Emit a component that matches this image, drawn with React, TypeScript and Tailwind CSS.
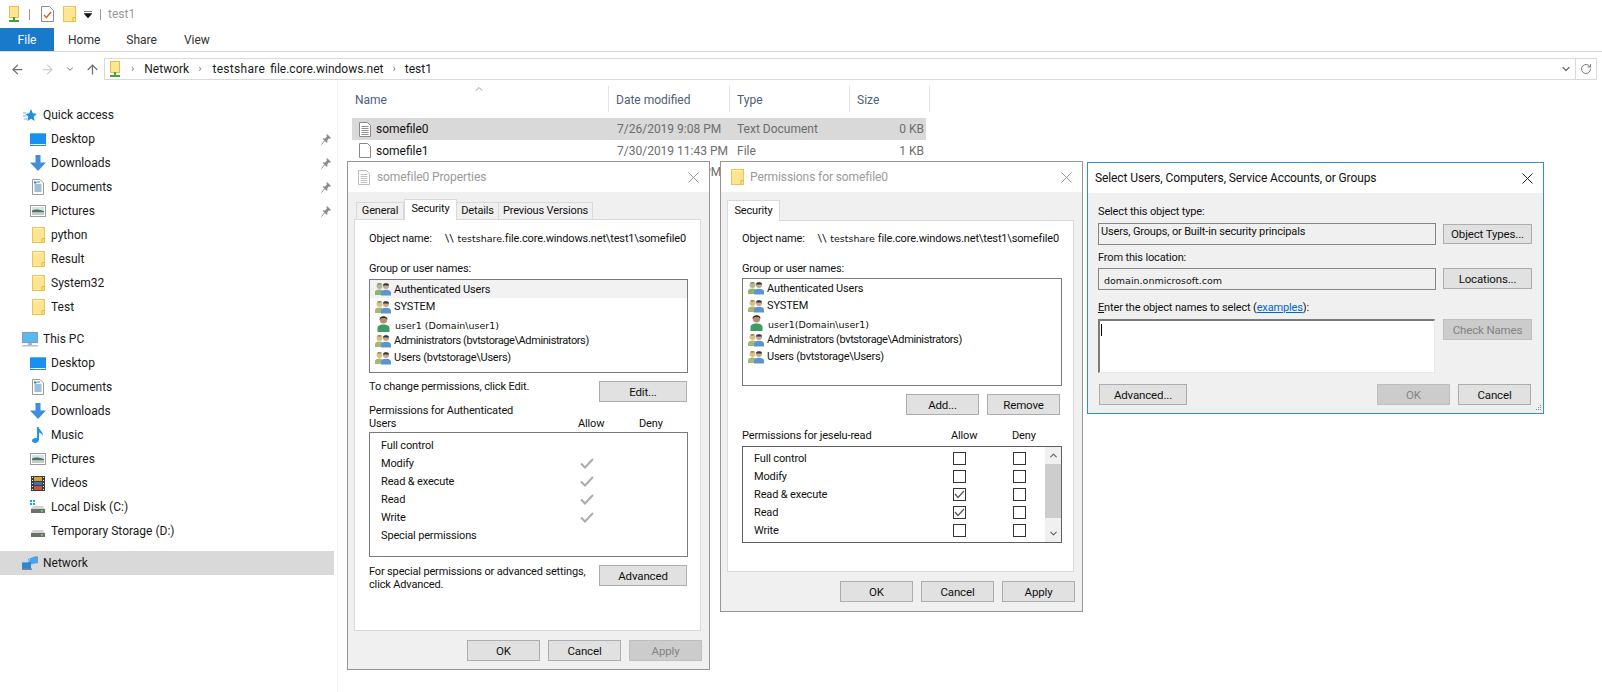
import React from "react";
import { ArrowLeft, ArrowRight, ArrowUp, ChevronDown, ChevronUp, RotateCw } from "lucide-react";

const Folder = ({ w = 13, h = 16 }: { w?: number; h?: number }) => (
  <svg width={w} height={h} viewBox="0 0 13 16" className="shrink-0">
    <rect x="0.5" y="0.5" width="12" height="15" fill="#fde594" stroke="#ecc34f" />
    <path d="M10 15.5V11.5H12.5" fill="none" stroke="#e5b52f" />
    <rect x="1" y="1" width="9" height="1" fill="#fff3c4" />
  </svg>
);

const NetFolder = () => (
  <svg width="10" height="16" viewBox="0 0 10 16" className="shrink-0">
    <rect x="0.5" y="0.5" width="9" height="11" fill="#fde594" stroke="#e8bd45" />
    <rect x="4" y="11" width="2" height="3" fill="#3fa535" />
    <rect x="0" y="14" width="10" height="2" fill="#3fa535" />
  </svg>
);

const FileIcon = ({ lines = true, faded = false }: { lines?: boolean; faded?: boolean }) => (
  <svg width="12" height="15" viewBox="0 0 12 15" className="shrink-0" opacity={faded ? 0.55 : 1}>
    <path d="M0.5 0.5H8.5L11.5 3.5V14.5H0.5Z" fill="#fff" stroke="#8a8a8a" />
    {lines && <path d="M2.5 4.5H9.5M2.5 6.5H9.5M2.5 8.5H9.5M2.5 10.5H9.5M2.5 12.5H9.5" stroke="#8f8f8f" strokeWidth="1" />}
  </svg>
);

const CheckDoc = () => (
  <svg width="13" height="16" viewBox="0 0 13 16">
    <path d="M0.5 0.5H8.5L12.5 4.5V15.5H0.5Z" fill="#fff" stroke="#8c8c8c" />
    <path d="M3 9L5.5 11.5L10 6" fill="none" stroke="#e2582b" strokeWidth="1.4" />
  </svg>
);

const Desktop = () => (
  <svg width="16" height="13" viewBox="0 0 16 13">
    <rect x="0" y="0" width="16" height="13" fill="#1a8fee" />
    <rect x="0" y="0" width="16" height="1" fill="#55b4f7" />
    <rect x="0.5" y="11" width="15" height="1" fill="#fff" />
    <rect x="1" y="11" width="3" height="1" fill="#cde9ff" />
  </svg>
);

const Down = () => (
  <svg width="16" height="16" viewBox="0 0 16 16">
    <path d="M5.5 0H10.5V7.5H16L8 16L0 7.5H5.5Z" fill="#3f8fdc" />
  </svg>
);

const Docs = () => (
  <svg width="12" height="16" viewBox="0 0 12 16">
    <path d="M0.5 0.5H8L11.5 4V15.5H0.5Z" fill="#fff" stroke="#9a9a9a" />
    <path d="M5 3H8M2.5 6H9.5M2.5 8H9.5M2.5 10H9.5M2.5 12H9.5" stroke="#3f7fb5" strokeWidth="1" />
    <rect x="2" y="2.5" width="2.5" height="2" fill="#3f7fb5" />
  </svg>
);

const Pics = () => (
  <svg width="16" height="12" viewBox="0 0 16 12">
    <rect x="0.5" y="0.5" width="15" height="11" fill="#fff" stroke="#9a9a9a" />
    <rect x="2" y="2" width="12" height="3" fill="#d5e2e8" />
    <path d="M2 5.5C5 4 9 4.5 14 6V7.5H2Z" fill="#4f7460" />
    <rect x="2" y="7.5" width="12" height="2.5" fill="#c0cdc6" />
  </svg>
);

const Music = () => (
  <svg width="12" height="16" viewBox="0 0 12 16">
    <path d="M5 0H6.6C7 3 11.5 4.5 11 9C10 6.8 8.5 6 7 5.6V12.8C7 14.8 5 16 3 16C1 16 0 15 0 13.6C0 12 2 11 3.5 11C4 11 4.6 11.1 5 11.3Z" fill="#1d94ee" />
  </svg>
);

const Videos = () => (
  <svg width="14" height="15" viewBox="0 0 14 15">
    <rect x="0" y="0" width="14" height="15" fill="#3c3c3c" />
    <rect x="3" y="1" width="8" height="4" fill="#d8a02f" />
    <rect x="3" y="6" width="8" height="3" fill="#3d6fc4" />
    <rect x="3" y="10" width="8" height="4" fill="#c7572f" />
    <path d="M1 1.5H2M1 4.5H2M1 7.5H2M1 10.5H2M1 13.5H2M12 1.5H13M12 4.5H13M12 7.5H13M12 10.5H13M12 13.5H13" stroke="#e8e8e8" />
  </svg>
);

const Disk = ({ win = false }: { win?: boolean }) => (
  <svg width="16" height="14" viewBox="0 0 16 14">
    {win && <path d="M0 0H2V2H0ZM3 0H5V2H3ZM0 3H2V5H0ZM3 3H5V5H3Z" fill="#19a3ee" />}
    <path d="M3 6H13L15 9H1Z" fill="#d4d4d4" />
    <rect x="1" y="9" width="14" height="4" fill="#6e6e6e" />
    <rect x="11" y="10" width="2" height="2" fill="#5fd04f" />
  </svg>
);

const Monitor = () => (
  <svg width="16" height="15" viewBox="0 0 16 15">
    <rect x="0.5" y="0.5" width="15" height="10" fill="#58b8f2" stroke="#7f9fb5" />
    <rect x="6" y="11" width="4" height="2" fill="#a8b6c0" />
    <rect x="0" y="13" width="16" height="1.5" fill="#b4c0c8" />
  </svg>
);

const NetworkIco = () => (
  <svg width="16" height="14" viewBox="0 0 16 14">
    <path d="M6 3L14 0L16 1V7L6 9Z" fill="#4fa3e2" />
    <path d="M0 6H9V13H0Z" fill="#2f85cf" />
    <path d="M0 6H6L8 3" fill="none" stroke="#a9d6f5" />
    <rect x="0" y="12.5" width="10" height="1.5" fill="#7c8a96" />
  </svg>
);

const Star = () => (
  <svg width="14" height="13" viewBox="0 0 14 13">
    <path d="M8 0L9.8 4.2L14 4.7L10.8 7.6L11.7 12L8 9.7L4.3 12L5.2 7.6L2.5 5L6.3 4.3Z" fill="#1f8fe6" />
    <path d="M0 4H3M0 7H3.5M1 10H4" stroke="#66b7f0" />
  </svg>
);

const Pin = () => (
  <svg width="10" height="11" viewBox="0 0 10 11" className="ml-auto mr-[3px] shrink-0">
    <path d="M6 0L10 4L8.8 4.8L8 4.3L6.2 6.5L6.5 8.2L5.6 8.8L1.8 5L2.6 4.2L4.2 4.5L6 2.3L5.4 1Z" fill="#8a8a8a" />
    <path d="M3.5 7L0.5 10.5" stroke="#8a8a8a" />
  </svg>
);

const Close = ({ color = "#9a9a9a" }: { color?: string }) => (
  <svg width="11" height="11" viewBox="0 0 11 11" className="shrink-0">
    <path d="M0.5 0.5L10.5 10.5M10.5 0.5L0.5 10.5" stroke={color} strokeWidth="1" />
  </svg>
);

const Users = ({ tint = "#d8c08c", body = "#a5b873" }: { tint?: string; body?: string }) => (
  <svg width="16" height="14" viewBox="0 0 16 14" className="shrink-0">
    <circle cx="4.5" cy="4" r="3" fill={tint} />
    <path d="M4 3L2 2C3 0.5 6 0.5 7 2Z" fill="#a08a52" />
    <path d="M0 13V10C0 8.5 2 7.5 4.5 7.5C7 7.5 8 8.5 8 10V13Z" fill={body} />
    <circle cx="11" cy="4" r="3" fill="#c9a58b" />
    <path d="M8 3.5C8 0.5 14 0.5 14 3.5Z" fill="#2f3a40" />
    <path d="M6 13.5V10.5C6 8.8 8.5 7.8 11 7.8C13.5 7.8 16 8.8 16 10.5V13.5Z" fill="#5b95cf" />
  </svg>
);

const User = () => (
  <svg width="13" height="18" viewBox="0 0 13 18" className="shrink-0">
    <circle cx="6.5" cy="5" r="3.6" fill="#b98d72" />
    <path d="M2.5 5C2 0 11 0 10.5 5L8.5 3H4.5Z" fill="#2a2a28" />
    <path d="M0.5 17V13C0.5 10.8 3 9.5 6.5 9.5C10 9.5 12.5 10.8 12.5 13V17Z" fill="#3f9a63" />
  </svg>
);

const Tick = () => (
  <svg width="14" height="11" viewBox="0 0 14 11">
    <path d="M1 5.5L5 9.5L13 1" fill="none" stroke="#ababab" strokeWidth="2" />
  </svg>
);

const Box = ({ on = false, faint = false }: { on?: boolean; faint?: boolean }) => (
  <div className={`w-[13px] h-[13px] border bg-white flex items-center justify-center ${faint ? "border-[#cccccc]" : "border-[#333333]"}`}>
    {on && (
      <svg width="11" height="9" viewBox="0 0 11 9">
        <path d="M1 4L4 7.5L10 1" fill="none" stroke="#555555" strokeWidth="1.2" />
      </svg>
    )}
  </div>
);

const Btn = ({ children, w = "w-[73px]", h = "h-[21px]", off = false }: { children: React.ReactNode; w?: string; h?: string; off?: boolean }) => (
  <div className={`${w} ${h} shrink-0 border flex items-center justify-center text-[11.5px] ${off ? "bg-[#cccccc] border-[#bfbfbf] text-[#838383]" : "bg-[#e1e1e1] border-[#adadad] text-[#111111]"}`}>
    {children}
  </div>
);

const NavRow = ({ icon, label, level = 1, pin = false, selected = false }: { icon: React.ReactNode; label: string; level?: number; pin?: boolean; selected?: boolean }) => (
  <div className={`h-[24px] w-[334px] flex items-center ${level === 1 ? "pl-[30px]" : "pl-[22px]"} ${selected ? "bg-[#d9d9d9]" : ""}`}>
    <span className="w-[16px] h-[16px] mr-[5px] shrink-0 flex items-center justify-center">{icon}</span>
    <span className="text-[#1a1a1a]">{label}</span>
    {pin && <Pin />}
  </div>
);

const FileRow = ({ name, date, type, size, sel = false, h, lines }: { name: string; date: string; type: string; size: string; sel?: boolean; h: string; lines: boolean }) => (
  <div className={`${h} w-[574px] grid grid-cols-[265px_120px_120px_69px] items-center ${sel ? "bg-[#d9d9d9]" : ""}`}>
    <div className="flex items-center pl-[7px] gap-[5px] text-[#111111]">
      <FileIcon lines={lines} />
      <span>{name}</span>
    </div>
    <span className="text-[#6d6d6d] whitespace-nowrap">{date}</span>
    <span className="text-[#6d6d6d]">{type}</span>
    <span className="text-[#6d6d6d] text-right pr-[2px]">{size}</span>
  </div>
);

const WinFrame = ({ pos, title, icon, active = false, children }: { pos: string; title: string; icon?: React.ReactNode; active?: boolean; children: React.ReactNode }) => (
  <section className={`absolute ${pos} bg-[#f0f0f0] border flex flex-col ${active ? "border-[#2b8fdc]" : "border-[#959595]"}`}>
    <header className={`h-[30px] shrink-0 bg-white flex items-center tracking-[-0.1px] ${active ? "pl-[7px]" : "pl-[10px]"}`}>
      {icon && <span className="w-[12px] mr-[7px] flex items-center shrink-0">{icon}</span>}
      <span className={active ? "text-[#111111]" : "text-[#9a9a9a]"}>{title}</span>
      <span className="ml-auto mr-[10px]">
        <Close color={active ? "#222222" : "#9a9a9a"} />
      </span>
    </header>
    <div className="flex-1 flex flex-col text-[11px] tracking-[-0.15px]">{children}</div>
  </section>
);

const PrincipalList = ({ cls, highlight, user }: { cls: string; highlight?: boolean; user: string }) => (
  <div className={`${cls} border border-[#7a7a7a] bg-white`}>
    <div className={`h-[18px] flex items-center pl-[5px] gap-[3px] ${highlight ? "bg-[#f2f2f2]" : ""}`}>
      <Users tint="#a9bb9a" body="#8fb36e" />
      <span className="pt-[1px]">Authenticated Users</span>
    </div>
    <div className="h-[17px] flex items-center pl-[5px] gap-[3px]">
      <Users />
      <span>SYSTEM</span>
    </div>
    <div className="h-[18px] flex items-center pl-[7px] gap-[5px]">
      <User />
      <span className="[font-family:'DejaVu_Sans',sans-serif] text-[9.5px] tracking-normal pt-[3px]">{user}</span>
    </div>
    <div className="h-[16px] flex items-center pl-[5px] gap-[3px]">
      <Users />
      <span className="tracking-[-0.4px]">Administrators (bvtstorage\Administrators)</span>
    </div>
    <div className="h-[17px] flex items-center pl-[5px] gap-[3px]">
      <Users />
      <span className="tracking-[-0.25px]">Users (bvtstorage\Users)</span>
    </div>
  </div>
);

const ObjectName = ({ mt, gap }: { mt: string; gap: string }) => (
  <div className={`h-[16px] ${mt} flex items-center whitespace-nowrap`}>
    <span className="w-[79px]">Object name:</span>
    <span>\\</span>
    <span className="[font-family:'DejaVu_Sans',sans-serif] text-[9.5px] tracking-normal ml-[4px]">testshare</span>
    <span className={gap}>file.core.windows.net\test1\somefile0</span>
  </div>
);

const PERMS = ["Full control", "Modify", "Read & execute", "Read", "Write", "Special permissions"];

export default function App() {
  return (
    <div className="relative w-[1602px] h-[692px] overflow-hidden bg-white text-[12px] leading-[16px] text-[#111111] [font-family:Roboto,sans-serif]">
      {/* Quick access toolbar */}
      <div className="h-[28px] flex items-center">
        <span className="ml-[9px]"><NetFolder /></span>
        <span className="ml-[10px] w-px h-[11px] bg-[#9a9a9a]" />
        <span className="ml-[11px]"><CheckDoc /></span>
        <span className="ml-[9px]"><Folder /></span>
        <svg width="8" height="7" viewBox="0 0 8 7" className="ml-[8px]">
          <path d="M0 0.5H8M0 2.5H8L4 7Z" fill="#111111" stroke="#111111" strokeWidth="0.5" />
        </svg>
        <span className="ml-[8px] w-px h-[11px] bg-[#9a9a9a]" />
        <span className="ml-[7px] text-[#9a9a9a]">test1</span>
      </div>
      {/* Ribbon tabs */}
      <div className="h-[24px] flex items-stretch border-b border-[#dadada]">
        <div className="w-[54px] bg-[#1979ca] text-white flex items-center justify-center">File</div>
        <div className="flex items-center text-[#333333]">
          <span className="ml-[14px]">Home</span>
          <span className="ml-[26px]">Share</span>
          <span className="ml-[27px]">View</span>
        </div>
      </div>
      {/* Address row */}
      <div className="h-[28px] pt-[6px] flex items-start">
        <div className="w-[104px] h-[22px] flex items-center shrink-0">
          <ArrowLeft size={15} strokeWidth={2} className="ml-[10px] text-[#6f6f6f]" />
          <ArrowRight size={15} strokeWidth={2} className="ml-[15px] text-[#cfcfcf]" />
          <ChevronDown size={10} strokeWidth={2.5} className="ml-[10px] text-[#8a8a8a]" />
          <ArrowUp size={15} strokeWidth={2} className="ml-[10px] text-[#6f6f6f]" />
        </div>
        <div className="w-[1493px] h-[22px] border border-[#d9d9d9] flex items-center">
          <span className="ml-[5px]"><NetFolder /></span>
          <span className="ml-[11px] text-[#777777] text-[11px]">›</span>
          <span className="ml-[10px] text-[#1a1a1a]">Network</span>
          <span className="ml-[9px] text-[#777777] text-[11px]">›</span>
          <span className="ml-[11px] text-[#1a1a1a] tracking-[0.3px]">testshare</span>
          <span className="ml-[5px] text-[#1a1a1a]">file.core.windows.net</span>
          <span className="ml-[9px] text-[#777777] text-[11px]">›</span>
          <span className="ml-[9px] text-[#1a1a1a]">test1</span>
          <ChevronDown size={12} strokeWidth={2.5} className="ml-auto mr-[3px] text-[#6f6f6f]" />
          <span className="w-px h-full bg-[#d9d9d9]" />
          <RotateCw size={12} strokeWidth={1.8} className="mx-[4px] text-[#6f6f6f]" />
        </div>
      </div>
      {/* Main */}
      <div className="flex h-[612px]">
        <nav className="w-[338px] shrink-0 pt-[23px] border-r border-[#f2f2f2]">
          <NavRow level={0} icon={<Star />} label="Quick access" />
          <NavRow icon={<Desktop />} label="Desktop" pin />
          <NavRow icon={<Down />} label="Downloads" pin />
          <NavRow icon={<Docs />} label="Documents" pin />
          <NavRow icon={<Pics />} label="Pictures" pin />
          <NavRow icon={<Folder />} label="python" />
          <NavRow icon={<Folder />} label="Result" />
          <NavRow icon={<Folder />} label="System32" />
          <NavRow icon={<Folder />} label="Test" />
          <div className="h-[8px]" />
          <NavRow level={0} icon={<Monitor />} label="This PC" />
          <NavRow icon={<Desktop />} label="Desktop" />
          <NavRow icon={<Docs />} label="Documents" />
          <NavRow icon={<Down />} label="Downloads" />
          <NavRow icon={<Music />} label="Music" />
          <NavRow icon={<Pics />} label="Pictures" />
          <NavRow icon={<Videos />} label="Videos" />
          <NavRow icon={<Disk win />} label="Local Disk (C:)" />
          <NavRow icon={<Disk />} label="Temporary Storage (D:)" />
          <div className="h-[8px]" />
          <NavRow level={0} selected icon={<NetworkIco />} label="Network" />
        </nav>
        <main className="pl-[14px] pt-[6px]">
          <div className="relative h-[26px] w-[578px] grid grid-cols-[257px_121px_120px_80px] text-[#4c607a]">
            <ChevronUp size={12} strokeWidth={1.5} className="absolute left-[121px] -top-[3px] text-[#777777]" />
            <div className="pl-[3px] pt-[2px] flex items-center border-r border-[#e5e5e5]">Name</div>
            <div className="pl-[7px] pt-[2px] flex items-center border-r border-[#e5e5e5]">Date modified</div>
            <div className="pl-[7px] pt-[2px] flex items-center border-r border-[#e5e5e5]">Type</div>
            <div className="pl-[7px] pt-[2px] flex items-center border-r border-[#e5e5e5]">Size</div>
          </div>
          <div className="mt-[6px]">
            <FileRow h="h-[22px]" sel lines name="somefile0" date="7/26/2019 9:08 PM" type="Text Document" size="0 KB" />
            <FileRow h="h-[21px]" lines={false} name="somefile1" date="7/30/2019 11:43 PM" type="File" size="1 KB" />
            <div className="h-[21px] flex items-center pl-[265px] text-[#6d6d6d] whitespace-nowrap">7/30/2019 9:43 PM</div>
          </div>
        </main>
      </div>

      {/* somefile0 Properties */}
      <WinFrame pos="left-[347px] top-[161px] w-[363px] h-[509px]" title="somefile0 Properties" icon={<FileIcon faded />}>
        <div className="pl-[6px] pt-[7px]">
          <div className="relative z-10 h-[20px] pl-[2px] flex items-end whitespace-nowrap">
            <div className="w-[48px] h-[17px] border border-b-0 border-[#d9d9d9] flex items-center justify-center">General</div>
            <div className="w-[53px] h-[21px] -mb-px bg-white border border-b-0 border-[#d9d9d9] flex items-start justify-center pt-[1px]">Security</div>
            <div className="w-[42px] h-[17px] border border-b-0 border-l-0 border-[#d9d9d9] flex items-center justify-center">Details</div>
            <div className="w-[94px] h-[17px] border border-b-0 border-l-0 border-[#d9d9d9] flex items-center justify-center">Previous Versions</div>
          </div>
          <div className="w-[347px] h-[412px] bg-white border border-[#d9d9d9] px-[14px]">
            <ObjectName mt="mt-[11px]" gap="before:content-['.']" />
            <div className="mt-[14px] h-[16px]">Group or user names:</div>
            <PrincipalList cls="mt-[2px] w-[319px] h-[94px]" highlight user="user1 (Domain\user1)" />
            <div className="mt-[8px] flex justify-between w-[318px]">
              <span className="-mt-[2px]">To change permissions, click Edit.</span>
              <Btn w="w-[88px]">Edit...</Btn>
            </div>
            <div className="mt-[2px] h-[26px] grid grid-cols-[209px_61px_49px] items-end leading-[13px]">
              <span>Permissions for Authenticated<br />Users</span>
              <span>Allow</span>
              <span>Deny</span>
            </div>
            <div className="mt-[2px] w-[319px] h-[125px] border border-[#7a7a7a] pt-[3px] pl-[11px]">
              {PERMS.map((p, i) => (
                <div key={p} className="h-[18px] grid grid-cols-[199px_20px] items-center">
                  <span className="pt-[1px]">{p}</span>
                  {i >= 1 && i <= 4 ? <Tick /> : <span />}
                </div>
              ))}
            </div>
            <div className="mt-[8px] flex justify-between w-[318px]">
              <span className="leading-[13px]">For special permissions or advanced settings,<br />click Advanced.</span>
              <Btn w="w-[88px]">Advanced</Btn>
            </div>
          </div>
        </div>
        <div className="mt-[9px] pr-[7px] flex justify-end gap-[8px]">
          <Btn>OK</Btn>
          <Btn>Cancel</Btn>
          <Btn off>Apply</Btn>
        </div>
      </WinFrame>

      {/* Permissions for somefile0 */}
      <WinFrame pos="left-[720px] top-[161px] w-[363px] h-[451px]" title="Permissions for somefile0" icon={<Folder />}>
        <div className="pl-[6px] pt-[7px]">
          <div className="relative z-10 h-[21px] flex items-end">
            <div className="w-[53px] h-[21px] -mb-px bg-white border border-b-0 border-[#d9d9d9] flex items-center justify-center">Security</div>
          </div>
          <div className="w-[347px] h-[352px] bg-white border border-[#d9d9d9] px-[14px]">
            <ObjectName mt="mt-[10px]" gap="ml-[3px]" />
            <div className="mt-[14px] h-[16px]">Group or user names:</div>
            <PrincipalList cls="mt-[1px] w-[320px] h-[108px]" user="user1(Domain\user1)" />
            <div className="mt-[8px] w-[318px] flex justify-end gap-[8px]">
              <Btn>Add...</Btn>
              <Btn>Remove</Btn>
            </div>
            <div className="mt-[13px] h-[16px] grid grid-cols-[209px_61px_50px] items-center">
              <span>Permissions for jeselu-read</span>
              <span>Allow</span>
              <span>Deny</span>
            </div>
            <div className="mt-[2px] w-[320px] h-[97px] border border-[#5f5f5f] flex overflow-hidden">
              <div className="flex-1 pt-[2px] pl-[11px]">
                {PERMS.slice(0, 5).map((p, i) => (
                  <div key={p} className="h-[18px] grid grid-cols-[199px_60px_13px] items-center">
                    <span className="pt-[1px]">{p}</span>
                    <Box on={i === 2 || i === 3} />
                    <Box />
                  </div>
                ))}
                <div className="h-[18px] grid grid-cols-[199px_60px_13px] items-center">
                  <span />
                  <Box faint />
                  <Box faint />
                </div>
              </div>
              <div className="w-[16px] shrink-0 bg-[#f0f0f0] flex flex-col items-center">
                <ChevronUp size={11} strokeWidth={2.5} className="mt-[3px] mb-[3px] text-[#606060]" />
                <div className="w-full h-[54px] bg-[#cdcdcd]" />
                <ChevronDown size={11} strokeWidth={2.5} className="mt-auto mb-[3px] text-[#606060]" />
              </div>
            </div>
          </div>
        </div>
        <div className="mt-[9px] pr-[7px] flex justify-end gap-[8px]">
          <Btn>OK</Btn>
          <Btn>Cancel</Btn>
          <Btn>Apply</Btn>
        </div>
      </WinFrame>

      {/* Select Users */}
      <WinFrame pos="left-[1087px] top-[162px] w-[457px] h-[252px]" title="Select Users, Computers, Service Accounts, or Groups" active>
        <div className="relative flex-1 pl-[10px] pt-[11px]">
          <div className="h-[16px]">Select this object type:</div>
          <div className="mt-[3px] flex items-center gap-[7px]">
            <div className="w-[338px] h-[22px] border border-[#858585] flex items-center pl-[2px] pb-[4px]">Users, Groups, or Built-in security principals</div>
            <Btn w="w-[89px]" h="h-[20px]">Object Types...</Btn>
          </div>
          <div className="mt-[5px] h-[16px]">From this location:</div>
          <div className="mt-[2px] flex items-start gap-[7px]">
            <div className="w-[338px] h-[22px] border border-[#858585] flex items-center pl-[5px] pt-[4px] [font-family:'DejaVu_Sans',sans-serif] text-[9.5px] tracking-normal">domain.onmicrosoft.com</div>
            <Btn w="w-[89px]">Locations...</Btn>
          </div>
          <div className="mt-[10px] h-[16px]">
            <span className="underline">E</span>nter the object names to select (<span className="text-[#0066cc] underline">examples</span>):
          </div>
          <div className="mt-[3px] flex items-start gap-[8px]">
            <div className="w-[337px] h-[54px] bg-white border-t-2 border-l-2 border-r border-b border-t-[#7a7a7a] border-l-[#7a7a7a] border-r-[#e8e8e8] border-b-[#e8e8e8] pl-[1px] pt-[3px]">
              <div className="w-px h-[12px] bg-black" />
            </div>
            <Btn w="w-[89px]" off>Check Names</Btn>
          </div>
          <div className="mt-[11px] ml-[1px] w-[432px] flex">
            <Btn w="w-[88px]">Advanced...</Btn>
            <div className="ml-auto flex gap-[8px]">
              <Btn off>OK</Btn>
              <Btn>Cancel</Btn>
            </div>
          </div>
          <svg width="8" height="8" viewBox="0 0 8 8" className="absolute right-[1px] bottom-[1px]">
            <path d="M6 1H7V2H6ZM4 3H5V4H4ZM6 3H7V4H6ZM2 5H3V6H2ZM4 5H5V6H4ZM6 5H7V6H6Z" fill="#8a8a8a" />
          </svg>
        </div>
      </WinFrame>
    </div>
  );
}
